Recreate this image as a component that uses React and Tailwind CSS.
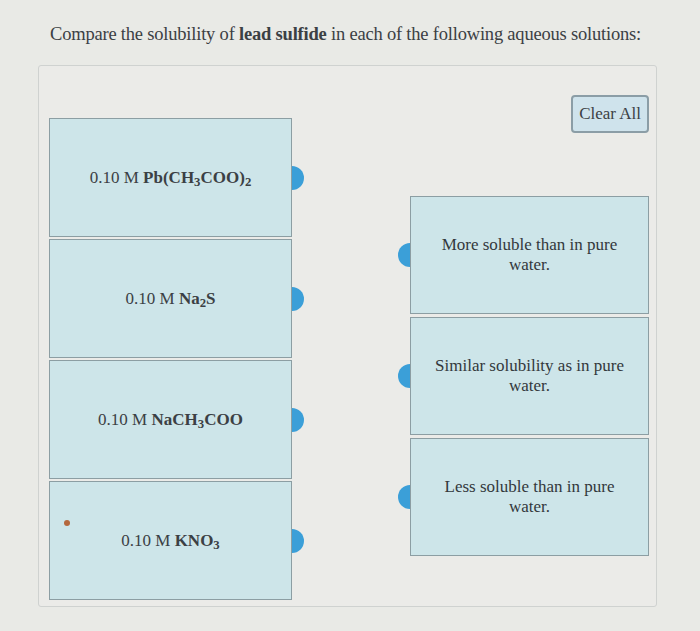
const solutions = [
  { id: "pb", label: <>Pb(CH<sub>3</sub>COO)<sub>2</sub></> },
  { id: "na2s", label: <>Na<sub>2</sub>S</> },
  { id: "nach3coo", label: <>NaCH<sub>3</sub>COO</> },
  { id: "kno3", label: <>KNO<sub>3</sub></> },
];

const targets = [
  "More soluble than in pure water.",
  "Similar solubility as in pure water.",
  "Less soluble than in pure water.",
];

function Knob({ side }) {
  // half-circle connector hanging off a card edge
  return side === "right" ? (
    <div className="absolute -right-[13px] top-1/2 h-[24px] w-[12px] -translate-y-1/2 rounded-r-full bg-[#3b9fd8]" />
  ) : (
    <div className="absolute -left-[13px] top-1/2 h-[24px] w-[12px] -translate-y-1/2 rounded-l-full bg-[#3b9fd8]" />
  );
}

export default function App() {
  return (
    <div
      className="min-h-[631px] w-[700px] bg-[#e9eae6] pt-[21px] text-[#3b4044]"
      style={{ fontFamily: '"Liberation Serif", "Times New Roman", serif' }}
    >
      <p className="pl-[50px] text-[18.5px] leading-[27px] tracking-[-0.2px]">
        Compare the solubility of <b>lead sulfide</b> in each of the following aqueous solutions:
      </p>

      <div className="ml-[38px] mt-[17px] flex h-[542px] w-[619px] justify-between rounded-[3px] border border-[#cfd2d0] bg-[#ebebe8] pl-[10px] pr-[7px] pt-[29px]">
        {/* draggable solutions */}
        <div className="relative mt-[23px] flex w-[243px] flex-col gap-[2px]">
          {solutions.map((s, i) => (
            <div
              key={s.id}
              className="relative flex h-[119px] items-center justify-center border border-[#8c9ea3] bg-[#cde5e9] text-[17px]"
            >
              {i === 3 && (
                <span className="absolute left-[14px] top-[38px] h-[6px] w-[6px] rounded-full bg-[#b4683e]" />
              )}
              <span>
                0.10 M <b className="font-bold">{s.label}</b>
              </span>
              <Knob side="right" />
            </div>
          ))}
        </div>

        {/* drop targets */}
        <div className="flex flex-col items-end">
          <button className="h-[38px] rounded-[4px] border-2 border-[#8b9da6] bg-[#cfe3ec] px-[6px] text-[17px] text-[#3b4044]">
            Clear All
          </button>
          <div className="mt-[63px] flex w-[239px] flex-col gap-[3px]">
            {targets.map((t) => (
              <div
                key={t}
                className="relative flex h-[118px] items-center justify-center border border-[#8c9ea3] bg-[#cde5e9] px-[16px] text-center text-[17px] leading-[20px] text-[#33383c]"
              >
                <span>{t}</span>
                <Knob side="left" />
              </div>
            ))}
          </div>
        </div>
      </div>
    </div>
  );
}
